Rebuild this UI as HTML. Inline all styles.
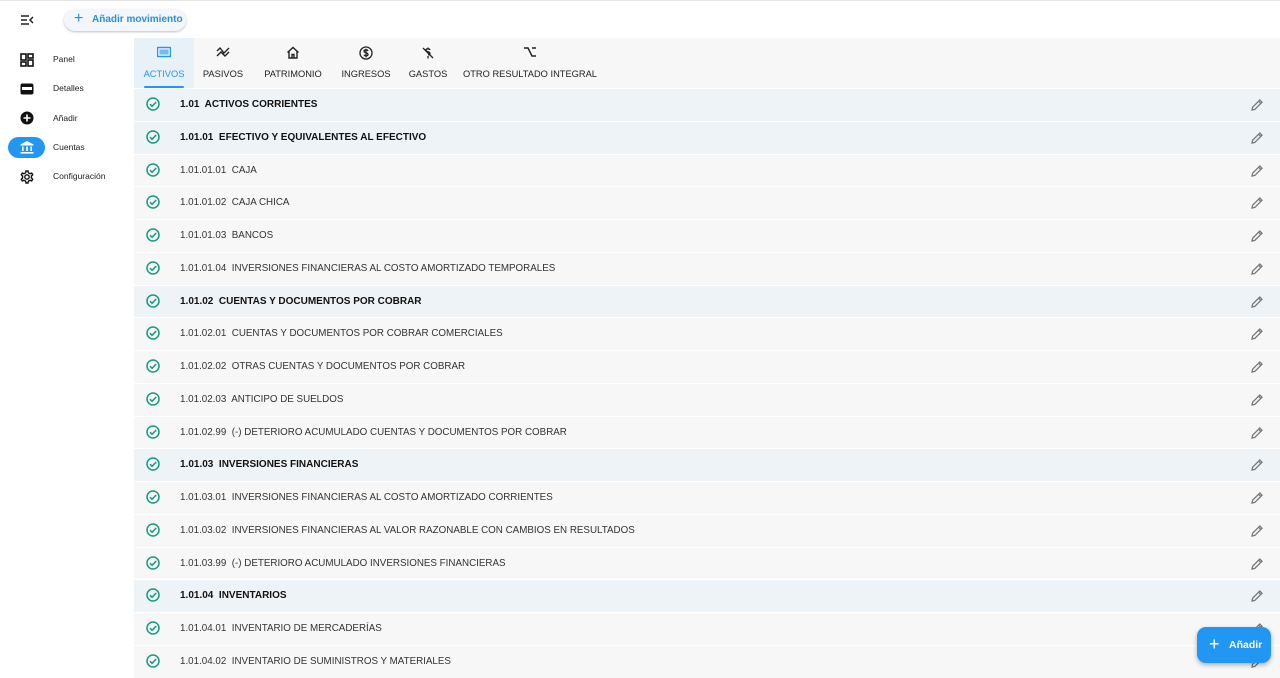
<!DOCTYPE html>
<html><head><meta charset="utf-8"><style>
*{box-sizing:border-box;margin:0;padding:0}
body{width:1280px;height:673px;overflow:hidden;background:#fff;font-family:"Liberation Sans",sans-serif;position:relative}
.topline{position:absolute;top:0;left:0;right:0;height:1px;background:#e4e4e4}
.menu{position:absolute;left:20px;top:14px}
.addbtn{position:absolute;left:64px;top:9px;width:122px;height:22px;border-radius:11px;background:#f3f7fc;box-shadow:0 1px 2px rgba(0,0,0,.25);color:#2b8de0;font-size:10px;font-weight:bold;line-height:22px;padding-left:28px;white-space:nowrap}
.addbtn span{position:absolute;left:10px;top:-1px;font-size:16px;font-weight:normal}
.nav{position:absolute;left:0;top:46px;width:134px}
.ni{position:relative;height:29.3px;font-size:8.5px;color:#222}
.ni .ic{position:absolute;left:8px;top:3px;width:37px;height:21px;border-radius:11px;display:flex;align-items:center;justify-content:center}
.ni .lb{position:absolute;left:53px;top:8px}
.ni.act .ic{background:#2196f3}
.main{position:absolute;left:134px;top:38px;right:0;bottom:0;background:#f7f7f7}
.tabs{height:50px;position:relative}
.tab{position:absolute;top:0;height:50px;text-align:center;font-size:9.3px;color:#222;white-space:nowrap}
.tab svg{position:absolute;top:8px;left:50%;margin-left:-7px}
.tab .t{position:absolute;top:31px;left:-20px;right:-20px}
.tab.act{background:#e8f0f8;color:#2196f3}
.tab.act:after{content:"";position:absolute;left:10px;right:10px;bottom:0;height:2px;background:#2196f3;border-radius:1px}
.row{position:relative;height:32.75px;border-top:1px solid #fff;font-size:9.8px;color:#333;background:#f7f7f7}
.row.h{background:#eef3f7;font-weight:bold;color:#111;font-size:10px}
.row .ck{position:absolute;left:12px;top:8px}
.row .tx{position:absolute;left:46px;top:10px;white-space:pre}
.row .pe{position:absolute;right:16px;top:9px}
.fab{position:absolute;left:1197px;top:627px;width:74px;height:36px;border-radius:9px;background:#2196f3;color:#fff;font-size:10.5px;font-weight:bold;line-height:36px;padding-left:32px;box-shadow:0 2px 5px rgba(0,0,0,.3)}
.fab span{position:absolute;left:12px;top:-1px;font-size:18px;font-weight:normal}
</style></head><body>
<div class="topline"></div>
<svg class="menu" width="14" height="12" viewBox="0 0 14 12"><path d="M1 2h8M1 6h6M1 10h8M13 3l-3 3 3 3" stroke="#222" stroke-width="1.5" fill="none"/></svg>
<div class="addbtn"><span>+</span>Añadir movimiento</div>
<div class="nav">
<div class="ni"><div class="ic"><svg width="14" height="14" viewBox="0 0 14 14" fill="none" stroke="#111" stroke-width="1.6"><rect x="1" y="1" width="5" height="6"/><rect x="8" y="1" width="5" height="4"/><rect x="1" y="9" width="5" height="4"/><rect x="8" y="7" width="5" height="6"/></svg></div><div class="lb">Panel</div></div>
<div class="ni"><div class="ic"><svg width="14" height="12" viewBox="0 0 14 12"><rect x="0.5" y="0.5" width="13" height="11" rx="2" fill="#111"/><rect x="2" y="4" width="10" height="3" fill="#fff"/></svg></div><div class="lb">Detalles</div></div>
<div class="ni"><div class="ic"><svg width="14" height="14" viewBox="0 0 14 14"><circle cx="7" cy="7" r="6.5" fill="#111"/><path d="M7 3.5v7M3.5 7h7" stroke="#fff" stroke-width="1.6"/></svg></div><div class="lb">Añadir</div></div>
<div class="ni act"><div class="ic"><svg width="14" height="13" viewBox="0 0 14 13" fill="#fff"><path d="M7 0L0.5 3.5v1h13v-1z"/><rect x="2" y="5.5" width="1.6" height="4.5"/><rect x="6.2" y="5.5" width="1.6" height="4.5"/><rect x="10.4" y="5.5" width="1.6" height="4.5"/><rect x="0.5" y="11" width="13" height="1.6"/></svg></div><div class="lb">Cuentas</div></div>
<div class="ni"><div class="ic"><svg width="14" height="14" viewBox="0 0 14 14" fill="none" stroke="#111" stroke-width="1.4"><circle cx="7" cy="7" r="2.2"/><path d="M6 1h2l.4 1.8 1.6.9 1.7-.6 1 1.7-1.3 1.3v1.8l1.3 1.3-1 1.7-1.7-.6-1.6.9L8 13H6l-.4-1.8-1.6-.9-1.7.6-1-1.7 1.3-1.3V6.1L1.3 4.8l1-1.7 1.7.6 1.6-.9z"/></svg></div><div class="lb">Configuración</div></div>
</div>
<div class="main">
<div class="tabs">
<div class="tab act" style="left:0;width:60px"><svg width="14" height="12" viewBox="0 0 14 12"><rect x="0.5" y="1.5" width="13" height="9" fill="none" stroke="#2196f3" stroke-width="1.4"/><rect x="2.5" y="3.5" width="9" height="5" fill="#2196f3" opacity=".6"/></svg><div class="t">ACTIVOS</div></div>
<div class="tab" style="left:60px;width:58px"><svg width="14" height="12" viewBox="0 0 14 12" fill="none" stroke="#222" stroke-width="1.4"><path d="M1 5l3-3 4 5 5-5M1 10l4-4 4 4 4-4"/></svg><div class="t">PASIVOS</div></div>
<div class="tab" style="left:128px;width:62px"><svg width="14" height="13" viewBox="0 0 14 13" fill="none" stroke="#222" stroke-width="1.4"><path d="M1.5 6.5L7 1.5l5.5 5M3 5.5V12h8V5.5M6 12V8.5h2V12"/></svg><div class="t">PATRIMONIO</div></div>
<div class="tab" style="left:202px;width:60px"><svg width="14" height="14" viewBox="0 0 14 14" fill="none" stroke="#222" stroke-width="1.3"><circle cx="7" cy="7" r="6"/><path d="M9 5c-.3-.8-1-1.2-2-1.2S5 4.3 5 5.2 6 6.4 7 6.7s2 .7 2 1.7-1 1.5-2 1.5-1.7-.4-2-1.2M7 2.8v8.4"/></svg><div class="t">INGRESOS</div></div>
<div class="tab" style="left:268px;width:52px"><svg width="14" height="14" viewBox="0 0 14 14" fill="none" stroke="#222" stroke-width="1.3"><path d="M9 4c-.3-.8-1-1.2-2-1.2S5 3.3 5 4.2 6 5.4 7 5.7s2 .7 2 1.7-1 1.5-2 1.5M7 1.5v2M7 10v2.5M2 2l10 10"/></svg><div class="t">GASTOS</div></div>
<div class="tab" style="left:330px;width:132px"><svg width="14" height="12" viewBox="0 0 14 12" fill="none" stroke="#222" stroke-width="1.4"><path d="M1 2h4l4 8h4M9 2h4"/></svg><div class="t">OTRO RESULTADO INTEGRAL</div></div>
</div>
<div id="rows"></div>
</div>
<div class="fab"><span>+</span>Añadir</div>
<script>
var d=[[1,"1.01  ACTIVOS CORRIENTES"],[1,"1.01.01  EFECTIVO Y EQUIVALENTES AL EFECTIVO"],[0,"1.01.01.01  CAJA"],[0,"1.01.01.02  CAJA CHICA"],[0,"1.01.01.03  BANCOS"],[0,"1.01.01.04  INVERSIONES FINANCIERAS AL COSTO AMORTIZADO TEMPORALES"],[1,"1.01.02  CUENTAS Y DOCUMENTOS POR COBRAR"],[0,"1.01.02.01  CUENTAS Y DOCUMENTOS POR COBRAR COMERCIALES"],[0,"1.01.02.02  OTRAS CUENTAS Y DOCUMENTOS POR COBRAR"],[0,"1.01.02.03  ANTICIPO DE SUELDOS"],[0,"1.01.02.99  (-) DETERIORO ACUMULADO CUENTAS Y DOCUMENTOS POR COBRAR"],[1,"1.01.03  INVERSIONES FINANCIERAS"],[0,"1.01.03.01  INVERSIONES FINANCIERAS AL COSTO AMORTIZADO CORRIENTES"],[0,"1.01.03.02  INVERSIONES FINANCIERAS AL VALOR RAZONABLE CON CAMBIOS EN RESULTADOS"],[0,"1.01.03.99  (-) DETERIORO ACUMULADO INVERSIONES FINANCIERAS"],[1,"1.01.04  INVENTARIOS"],[0,"1.01.04.01  INVENTARIO DE MERCADERÍAS"],[0,"1.01.04.02  INVENTARIO DE SUMINISTROS Y MATERIALES"]];
var ck='<svg class="ck" width="14" height="14" viewBox="0 0 14 14" fill="none" stroke="#159a80" stroke-width="1.5"><circle cx="7" cy="7" r="6"/><path d="M4 7.2l2.1 2.1L10.2 5"/></svg>';
var pe='<svg class="pe" width="14" height="14" viewBox="0 0 14 14" fill="none" stroke="#777" stroke-width="1.3"><path d="M2 12l.6-2.8L9.8 2l2.2 2.2-7.2 7.2zM8.6 3.2l2.2 2.2"/></svg>';
var h='';d.forEach(function(r){h+='<div class="row'+(r[0]?' h':'')+'">'+ck+'<div class="tx">'+r[1]+'</div>'+pe+'</div>';});
document.getElementById('rows').innerHTML=h;
</script>
</body></html>
